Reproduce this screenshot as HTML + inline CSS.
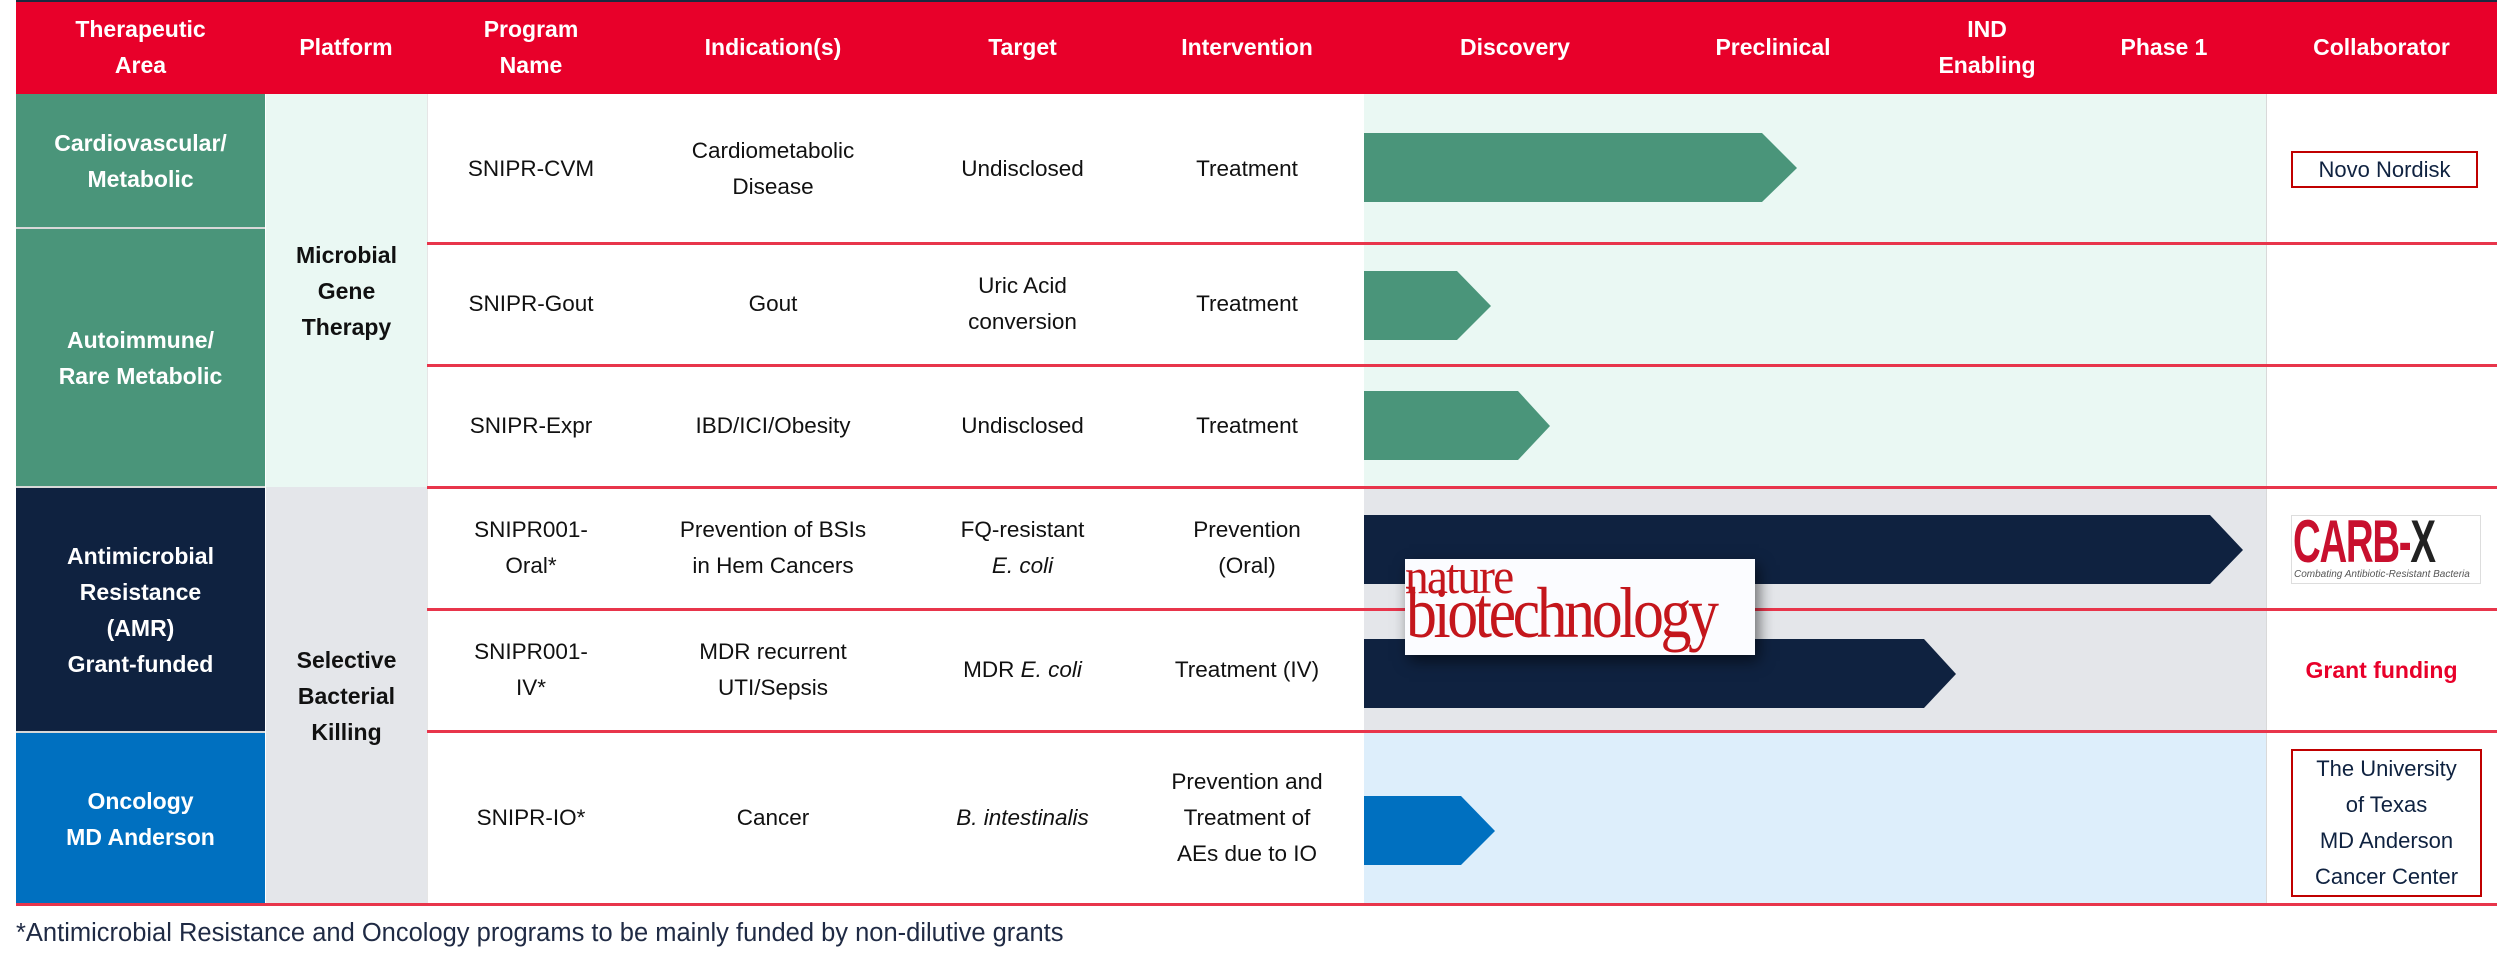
<!DOCTYPE html>
<html><head><meta charset="utf-8"><style>
*{margin:0;padding:0;box-sizing:border-box}
body{width:2500px;height:967px;background:#fff;position:relative;overflow:hidden;font-family:"Liberation Sans",sans-serif;}
.a{position:absolute}
.c{position:absolute;display:flex;align-items:center;justify-content:center;text-align:center;line-height:36px;font-size:22.5px;color:#111}
.h{color:#fff;font-weight:bold;font-size:23px;line-height:36px}
.w{color:#fff;font-weight:bold;font-size:23px}
.b{font-weight:bold}
.rl{position:absolute;height:3px;background:#e8354b}
</style></head><body>
<div class="a" style="left:16px;top:0;width:2481px;height:2px;background:#1a2a40"></div>
<div class="a" style="left:16px;top:2px;width:2481px;height:92px;background:#e8002a"></div>
<div class="c h" style="left:16px;top:0;width:249px;height:94px">Therapeutic<br>Area</div>
<div class="c h" style="left:265px;top:0;width:162px;height:94px">Platform</div>
<div class="c h" style="left:431px;top:0;width:200px;height:94px">Program<br>Name</div>
<div class="c h" style="left:640px;top:0;width:266px;height:94px">Indication(s)</div>
<div class="c h" style="left:905px;top:0;width:235px;height:94px">Target</div>
<div class="c h" style="left:1140px;top:0;width:214px;height:94px">Intervention</div>
<div class="c h" style="left:1415px;top:0;width:200px;height:94px">Discovery</div>
<div class="c h" style="left:1673px;top:0;width:200px;height:94px">Preclinical</div>
<div class="c h" style="left:1887px;top:0;width:200px;height:94px">IND<br>Enabling</div>
<div class="c h" style="left:2064px;top:0;width:200px;height:94px">Phase 1</div>
<div class="c h" style="left:2266px;top:0;width:231px;height:94px">Collaborator</div>

<div class="c w" style="left:16px;top:94px;width:249px;height:133px;background:#4a957a">Cardiovascular/<br>Metabolic</div>
<div class="c w" style="left:16px;top:229px;width:249px;height:257px;background:#4a957a">Autoimmune/<br>Rare Metabolic</div>
<div class="c w" style="left:16px;top:488px;width:249px;height:243px;background:#0f2240">Antimicrobial<br>Resistance<br>(AMR)<br>Grant-funded</div>
<div class="c w" style="left:16px;top:733px;width:249px;height:171px;background:#0070c0">Oncology<br>MD Anderson</div>
<div class="c b" style="left:266px;top:94px;width:161px;height:393px;background:#eaf8f3;font-size:23px">Microbial<br>Gene<br>Therapy</div>
<div class="c b" style="left:266px;top:487px;width:161px;height:417px;background:#e4e6ea;font-size:23px">Selective<br>Bacterial<br>Killing</div>
<div class="a" style="left:1364px;top:94px;width:902px;height:393px;background:#eaf8f3"></div>
<div class="a" style="left:1364px;top:487px;width:902px;height:244px;background:#e4e6ea"></div>
<div class="a" style="left:1364px;top:731px;width:902px;height:173px;background:#ddeefb"></div>
<div class="a" style="left:2266px;top:94px;width:1px;height:810px;background:#d9d9d9"></div>
<div class="a" style="left:427px;top:94px;width:1px;height:810px;background:#e6e6e6"></div>

<div class="c" style="left:431px;top:94px;width:200px;height:149px">SNIPR-CVM</div>
<div class="c" style="left:640px;top:94px;width:266px;height:149px">Cardiometabolic<br>Disease</div>
<div class="c" style="left:905px;top:94px;width:235px;height:149px">Undisclosed</div>
<div class="c" style="left:1140px;top:94px;width:214px;height:149px">Treatment</div>

<div class="c" style="left:431px;top:243px;width:200px;height:122px">SNIPR-Gout</div>
<div class="c" style="left:640px;top:243px;width:266px;height:122px">Gout</div>
<div class="c" style="left:905px;top:243px;width:235px;height:122px">Uric Acid<br>conversion</div>
<div class="c" style="left:1140px;top:243px;width:214px;height:122px">Treatment</div>

<div class="c" style="left:431px;top:365px;width:200px;height:122px">SNIPR-Expr</div>
<div class="c" style="left:640px;top:365px;width:266px;height:122px">IBD/ICI/Obesity</div>
<div class="c" style="left:905px;top:365px;width:235px;height:122px">Undisclosed</div>
<div class="c" style="left:1140px;top:365px;width:214px;height:122px">Treatment</div>

<div class="c" style="left:431px;top:487px;width:200px;height:122px">SNIPR001-<br>Oral*</div>
<div class="c" style="left:640px;top:487px;width:266px;height:122px">Prevention of BSIs<br>in Hem Cancers</div>
<div class="c" style="left:905px;top:487px;width:235px;height:122px"><span>FQ-resistant<br><i>E. coli</i></span></div>
<div class="c" style="left:1140px;top:487px;width:214px;height:122px">Prevention<br>(Oral)</div>

<div class="c" style="left:431px;top:609px;width:200px;height:122px">SNIPR001-<br>IV*</div>
<div class="c" style="left:640px;top:609px;width:266px;height:122px">MDR recurrent<br>UTI/Sepsis</div>
<div class="c" style="left:905px;top:609px;width:235px;height:122px"><span>MDR <i>E. coli</i></span></div>
<div class="c" style="left:1140px;top:609px;width:214px;height:122px">Treatment (IV)</div>

<div class="c" style="left:431px;top:731px;width:200px;height:173px">SNIPR-IO*</div>
<div class="c" style="left:640px;top:731px;width:266px;height:173px">Cancer</div>
<div class="c" style="left:905px;top:731px;width:235px;height:173px"><i>B. intestinalis</i></div>
<div class="c" style="left:1140px;top:731px;width:214px;height:173px">Prevention and<br>Treatment of<br>AEs due to IO</div>

<div class="rl" style="left:427px;top:242px;width:2070px"></div>
<div class="rl" style="left:427px;top:364px;width:2070px"></div>
<div class="rl" style="left:427px;top:486px;width:2070px"></div>
<div class="rl" style="left:427px;top:608px;width:2070px"></div>
<div class="rl" style="left:427px;top:730px;width:2070px"></div>
<div class="rl" style="left:16px;top:903px;width:2481px"></div>
<div class="a" style="left:16px;top:227px;width:249px;height:2px;background:#d8d8d8"></div>
<div class="a" style="left:16px;top:486px;width:249px;height:2px;background:#d8d8d8"></div>
<div class="a" style="left:16px;top:731px;width:249px;height:2px;background:#d8d8d8"></div>

<svg class="a" style="left:0;top:0" width="2500" height="967">
<polygon points="1364,133 1762,133 1797,168 1762,202 1364,202" fill="#4a957a"/>
<polygon points="1364,271 1457,271 1491,306 1457,340 1364,340" fill="#4a957a"/>
<polygon points="1364,391 1518,391 1550,426 1518,460 1364,460" fill="#4a957a"/>
<polygon points="1364,515 2210,515 2243,550 2210,584 1364,584" fill="#0f2240"/>
<polygon points="1364,639 1924,639 1956,674 1924,708 1364,708" fill="#0f2240"/>
<polygon points="1364,796 1461,796 1495,831 1461,865 1364,865" fill="#0070c0"/>
</svg>

<div class="a" style="left:1405px;top:559px;width:350px;height:96px;background:#fbfcff;box-shadow:4px 6px 14px rgba(0,0,0,.55);overflow:hidden">
<div class="a" style="left:0;top:-12px;font-family:'Liberation Serif',serif;color:#c4161c;font-size:50px;letter-spacing:-2px;white-space:nowrap;transform:scaleX(.95);transform-origin:left">nature</div>
<div class="a" style="left:1px;top:18px;font-family:'Liberation Serif',serif;color:#c4161c;font-size:72px;letter-spacing:-4px;line-height:72px;white-space:nowrap;transform:scaleX(.86);transform-origin:left">biotechnology</div>
</div>

<div class="c" style="left:2291px;top:151px;width:187px;height:37px;border:2px solid #c00000;color:#0f2240;font-size:22px">Novo Nordisk</div>
<div class="a" style="left:2291px;top:515px;width:190px;height:69px;background:#fff;border:1px solid #ddd;overflow:hidden">
<div class="a" style="left:1px;top:-6px;font-size:60px;line-height:64px;font-weight:bold;color:#c8102e;letter-spacing:-2px;white-space:nowrap;transform:scaleX(.64);transform-origin:left">CARB-<span style="color:#222">X</span></div>
<div class="a" style="left:2px;top:53px;font-size:10px;font-style:italic;color:#555;white-space:nowrap">Combating Antibiotic-Resistant Bacteria</div>
</div>
<div class="c b" style="left:2266px;top:609px;width:231px;height:122px;color:#e8002a;font-size:23px">Grant funding</div>
<div class="c" style="left:2291px;top:749px;width:191px;height:148px;border:2px solid #c00000;color:#0f2240;font-size:22px;line-height:36px">The University<br>of Texas<br>MD Anderson<br>Cancer Center</div>

<div class="a" style="left:16px;top:919px;font-size:25.5px;color:#1f2a44;white-space:nowrap">*Antimicrobial Resistance and Oncology programs to be mainly funded by non-dilutive grants</div>
</body></html>
